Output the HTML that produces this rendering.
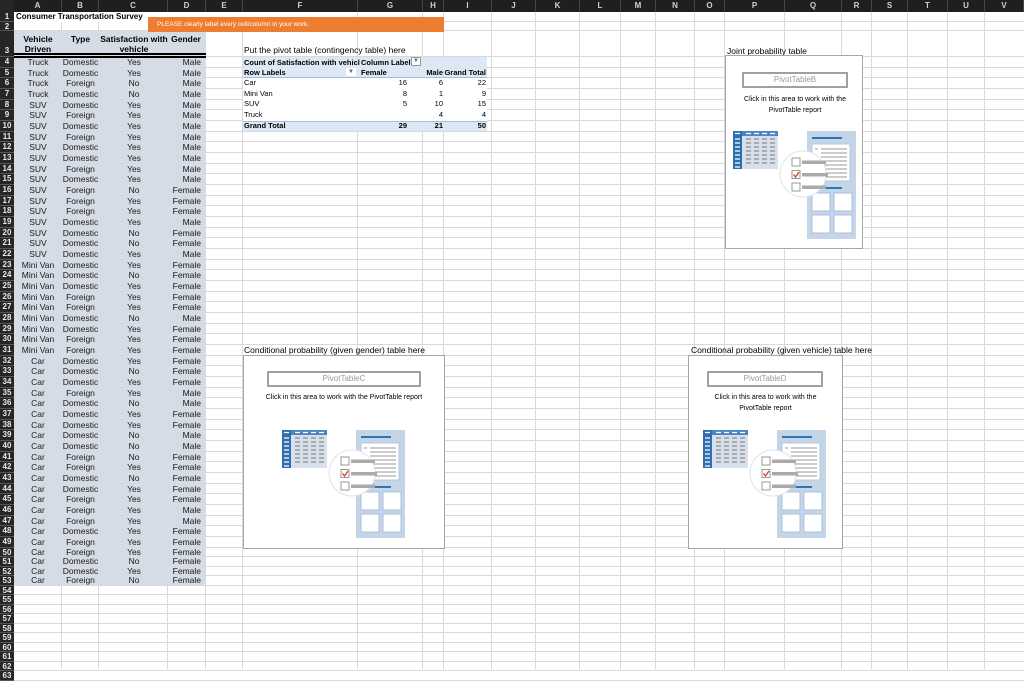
<!DOCTYPE html>
<html><head><meta charset="utf-8">
<style>
*{margin:0;padding:0;box-sizing:border-box}
body{width:1024px;height:669px;overflow:hidden;background:#fff;position:relative;font-family:"Liberation Sans",Arial,sans-serif;color:#000}
.a{position:absolute}
.hl{position:absolute;height:1px;background:#d9d9d9}
.vl{position:absolute;width:1px;background:#d9d9d9}
.ch{position:absolute;top:0;height:12px;color:#d0d0d0;font-size:8px;font-weight:bold;text-align:center;line-height:12px}
.rn{position:absolute;left:0;width:14px;color:#e8e8e8;font-size:8px;font-weight:bold;text-align:center;background:#262626;border-bottom:1px solid #555}
.d{position:absolute;font-size:8.5px;white-space:nowrap;text-align:center;color:#1a1a1a}
.pv{position:absolute;font-size:7.5px;white-space:nowrap}
.box{position:absolute;background:#fff;border:1px solid #a6a6a6}
.inp{position:absolute;border:2px solid #a0a0a0;background:#fff;color:#9a9a9a;font-size:8px;text-align:center;line-height:12px}
.ct{position:absolute;font-size:7px;text-align:center;line-height:10.5px}
.lbl{position:absolute;font-size:8.5px;white-space:nowrap}
.hd{position:absolute;font-size:8.5px;font-weight:bold;line-height:10px;text-align:center;white-space:nowrap}
</style></head><body>
<div id="g"></div>
<script>
var cols=[14,62,99,168,206,243,358,423,444,492,536,580,621,656,695,725,785,842,872,908,948,985,1024];
var letters="ABCDEFGHIJKLMNOPQRSTUV";
function rowTop(n){if(n==1)return 12;if(n==2)return 22;if(n==3)return 31;if(n<=50)return 57+(n-4)*10.67;return 547.9+(n-50)*9.5;}
var h='';
h+='<div class="a" style="left:0;top:0;width:1024px;height:12px;background:#1f1f1f"></div>';
h+='<div class="a" style="left:0;top:0;width:14px;height:669px;background:#262626"></div>';
for(var i=0;i<22;i++){h+='<div class="ch" style="left:'+cols[i]+'px;width:'+(cols[i+1]-cols[i])+'px;border-right:1px solid #444">'+letters[i]+'</div>';}
for(var n=1;n<=63;n++){var t=rowTop(n),b=rowTop(n+1);h+='<div class="rn" style="top:'+t+'px;height:'+(b-t)+'px;line-height:'+(n==3?(b-t)*1.5:(b-t))+'px">'+n+'</div>';
h+='<div class="hl" style="left:14px;width:1010px;top:'+(b-1)+'px"></div>';}
for(var i=1;i<cols.length-1;i++){h+='<div class="vl" style="left:'+(cols[i]-1)+'px;top:12px;height:657px"></div>';}
h+='<div class="a" style="left:14px;top:31px;width:192px;height:'+(rowTop(54)-31)+'px;background:#d6dce5"></div>';
h+='<div class="a" style="left:14px;top:53px;width:192px;height:1.5px;background:#000"></div>';
h+='<div class="a" style="left:14px;top:56px;width:192px;height:1.5px;background:#000"></div>';
var D=[["Truck","Domestic","Yes","Male"],["Truck","Domestic","Yes","Male"],["Truck","Foreign","No","Male"],["Truck","Domestic","No","Male"],
["SUV","Domestic","Yes","Male"],["SUV","Foreign","Yes","Male"],["SUV","Domestic","Yes","Male"],["SUV","Foreign","Yes","Male"],["SUV","Domestic","Yes","Male"],["SUV","Domestic","Yes","Male"],["SUV","Foreign","Yes","Male"],["SUV","Domestic","Yes","Male"],["SUV","Foreign","No","Female"],["SUV","Foreign","Yes","Female"],["SUV","Foreign","Yes","Female"],["SUV","Domestic","Yes","Male"],["SUV","Domestic","No","Female"],["SUV","Domestic","No","Female"],["SUV","Domestic","Yes","Male"],
["Mini Van","Domestic","Yes","Female"],["Mini Van","Domestic","No","Female"],["Mini Van","Domestic","Yes","Female"],["Mini Van","Foreign","Yes","Female"],["Mini Van","Foreign","Yes","Female"],["Mini Van","Domestic","No","Male"],["Mini Van","Domestic","Yes","Female"],["Mini Van","Foreign","Yes","Female"],["Mini Van","Foreign","Yes","Female"],
["Car","Domestic","Yes","Female"],["Car","Domestic","No","Female"],["Car","Domestic","Yes","Female"],["Car","Foreign","Yes","Male"],["Car","Domestic","No","Male"],["Car","Domestic","Yes","Female"],["Car","Domestic","Yes","Female"],["Car","Domestic","No","Male"],["Car","Domestic","No","Male"],["Car","Foreign","No","Female"],["Car","Foreign","Yes","Female"],["Car","Domestic","No","Female"],["Car","Domestic","Yes","Female"],["Car","Foreign","Yes","Female"],["Car","Foreign","Yes","Male"],["Car","Foreign","Yes","Male"],["Car","Domestic","Yes","Female"],["Car","Foreign","Yes","Female"],["Car","Foreign","Yes","Female"],["Car","Domestic","No","Female"],["Car","Domestic","Yes","Female"],["Car","Foreign","No","Female"]];
var cx=[[14,48],[62,37],[99,70],[170,31]];
for(var r=0;r<D.length;r++){var t=rowTop(r+4),b=rowTop(r+5);
for(var c=0;c<4;c++){var al=c==3?'right':'center';h+='<div class="d" style="left:'+cx[c][0]+'px;width:'+cx[c][1]+'px;top:'+t+'px;height:'+(b-t)+'px;line-height:'+(b-t)+'px;text-align:'+al+'">'+D[r][c]+'</div>';}}
document.getElementById('g').innerHTML=h;
</script>
<div class="a" style="left:14px;top:12px;width:230px;height:10px;background:#fff"></div>
<div class="a" style="left:16px;top:12px;font-size:8px;font-weight:bold;line-height:10px">Consumer Transportation Survey</div>
<div class="a" style="left:148px;top:17px;width:296px;height:15px;background:#ed7d31;color:#fff;font-size:6.5px;line-height:15px;padding-left:9px">PLEASE clearly label every cell/column in your work.</div>
<div class="hd" style="left:14px;top:34px;width:48px">Vehicle<br>Driven</div>
<div class="hd" style="left:62px;top:34px;width:37px">Type</div>
<div class="hd" style="left:99px;top:34px;width:70px">Satisfaction with<br>vehicle</div>
<div class="hd" style="left:169px;top:34px;width:34px">Gender</div>
<div class="lbl" style="left:244px;top:45px">Put the pivot table (contingency table) here</div>
<div class="a" style="left:243px;top:57px;width:244px;height:21px;background:#dde8f4;border-bottom:1px solid #9bc2e6"></div>
<div class="a" style="left:243px;top:78px;width:244px;height:43px;background:#fff"></div>
<div class="a" style="left:243px;top:121px;width:244px;height:10px;background:#dde8f4;border-top:1px solid #9bc2e6"></div>
<div class="pv" style="left:244px;top:57px;line-height:11px;font-weight:bold">Count of Satisfaction with vehicl</div>
<div class="pv" style="left:361px;top:57px;line-height:11px;font-weight:bold">Column Label</div>
<div class="a" style="left:411px;top:57px;width:10px;height:9px;border:1px solid #999;background:#fff;font-size:6px;color:#666;text-align:center;line-height:7px">▼</div>
<div class="pv" style="left:244px;top:67px;line-height:11px;font-weight:bold">Row Labels</div>
<div class="a" style="left:346px;top:68px;width:10px;height:8px;background:#fff;font-size:6px;color:#666;text-align:center;line-height:8px">▼</div>
<div class="pv" style="left:361px;top:67px;line-height:11px;font-weight:bold">Female</div>
<div class="pv" style="left:420px;width:23px;text-align:right;top:67px;line-height:11px;font-weight:bold">Male</div>
<div class="pv" style="left:440px;width:46px;text-align:right;top:67px;line-height:11px;font-weight:bold">Grand Total</div>
<div class="pv" style="left:244px;top:78px;line-height:10.7px">Car<br>Mini Van<br>SUV<br>Truck</div>
<div class="pv" style="left:380px;width:27px;text-align:right;top:78px;line-height:10.7px">16<br>8<br>5<br>&nbsp;</div>
<div class="pv" style="left:420px;width:23px;text-align:right;top:78px;line-height:10.7px">6<br>1<br>10<br>4</div>
<div class="pv" style="left:450px;width:36px;text-align:right;top:78px;line-height:10.7px">22<br>9<br>15<br>4</div>
<div class="pv" style="left:244px;top:121px;line-height:10px;font-weight:bold">Grand Total</div>
<div class="pv" style="left:380px;width:27px;text-align:right;top:121px;line-height:10px;font-weight:bold">29</div>
<div class="pv" style="left:420px;width:23px;text-align:right;top:121px;line-height:10px;font-weight:bold">21</div>
<div class="pv" style="left:450px;width:36px;text-align:right;top:121px;line-height:10px;font-weight:bold">50</div>

<svg width="0" height="0" style="position:absolute"><defs>
<g id="ic">
<rect x="0" y="0" width="45" height="38" fill="#d7e0ec"/>
<rect x="0" y="0" width="45" height="5" fill="#4a86c5"/>
<rect x="0" y="0" width="9" height="38" fill="#2e6fb0"/>
<g stroke="#fff" stroke-width="1.2"><path d="M2 2.5h5M13 2.5h5M21 2.5h5M29 2.5h5M37 2.5h5"/>
<path d="M2 8h5M2 12h5M2 16h5M2 20h5M2 24h5M2 28h5M2 32h5M2 36h5"/></g>
<g stroke="#8a8a8a" stroke-width="1.2"><path d="M13 8h5M21 8h5M29 8h5M37 8h5M13 12h5M21 12h5M29 12h5M37 12h5M13 16h5M21 16h5M29 16h5M37 16h5M13 20h5M21 20h5M29 20h5M37 20h5M13 24h5M21 24h5M29 24h5M37 24h5M13 28h5M21 28h5M29 28h5M37 28h5M13 32h5M21 32h5M29 32h5M37 32h5"/></g>
<rect x="74" y="0" width="49" height="108" fill="#c4d5e8"/>
<path d="M79 7h30" stroke="#2e75b6" stroke-width="2"/>
<rect x="79" y="13" width="38" height="37" fill="#fff" stroke="#b5c8de"/>
<g stroke="#999" stroke-width="1.1"><path d="M82 18h3M88 18h26M88 22h26M88 26h26M88 30h26M88 34h26M88 38h26M88 42h26M88 46h26"/></g>
<path d="M79 57h30" stroke="#2e75b6" stroke-width="2"/>
<g fill="#fff" stroke="#a9c0dc"><rect x="79" y="62" width="18" height="18"/><rect x="101" y="62" width="18" height="18"/><rect x="79" y="84" width="18" height="18"/><rect x="101" y="84" width="18" height="18"/></g>
<circle cx="70" cy="43" r="23" fill="#fff" stroke="#dbe4ef" stroke-width="1"/>
<g fill="#fff" stroke="#999"><rect x="59" y="27" width="8" height="8"/><rect x="59" y="39.5" width="8" height="8"/><rect x="59" y="52" width="8" height="8"/></g>
<path d="M60.5 43.5l2 2.5 3.5-5" stroke="#d9452b" stroke-width="1.4" fill="none"/>
<g fill="#aaa"><rect x="69" y="29.5" width="24" height="3.5"/><rect x="69" y="42" width="26" height="3.5"/><rect x="69" y="54.5" width="24" height="3.5"/></g>
</g></defs></svg>

<div class="lbl" style="left:727px;top:46px">Joint probability table</div>
<div class="box" style="left:725px;top:55px;width:138px;height:194px"></div>
<div class="inp" style="left:742px;top:72px;width:106px;height:16px">PivotTableB</div>
<div class="ct" style="left:728px;top:95px;width:134px">Click in this area to work with the<br>PivotTable report</div>
<svg class="a" style="left:733px;top:131px" width="125" height="110"><use href="#ic"/></svg>

<div class="lbl" style="left:244px;top:345px">Conditional probability (given gender) table here</div>
<div class="box" style="left:243px;top:355px;width:202px;height:194px"></div>
<div class="inp" style="left:267px;top:371px;width:154px;height:16px">PivotTableC</div>
<div class="ct" style="left:243px;top:393px;width:202px">Click in this area to work with the PivotTable report</div>
<svg class="a" style="left:282px;top:430px" width="125" height="110"><use href="#ic"/></svg>

<div class="lbl" style="left:691px;top:345px">Conditional probability (given vehicle) table here</div>
<div class="box" style="left:688px;top:355px;width:155px;height:194px"></div>
<div class="inp" style="left:707px;top:371px;width:116px;height:16px">PivotTableD</div>
<div class="ct" style="left:690px;top:393px;width:151px">Click in this area to work with the<br>PivotTable report</div>
<svg class="a" style="left:703px;top:430px" width="125" height="110"><use href="#ic"/></svg>
</body></html>
